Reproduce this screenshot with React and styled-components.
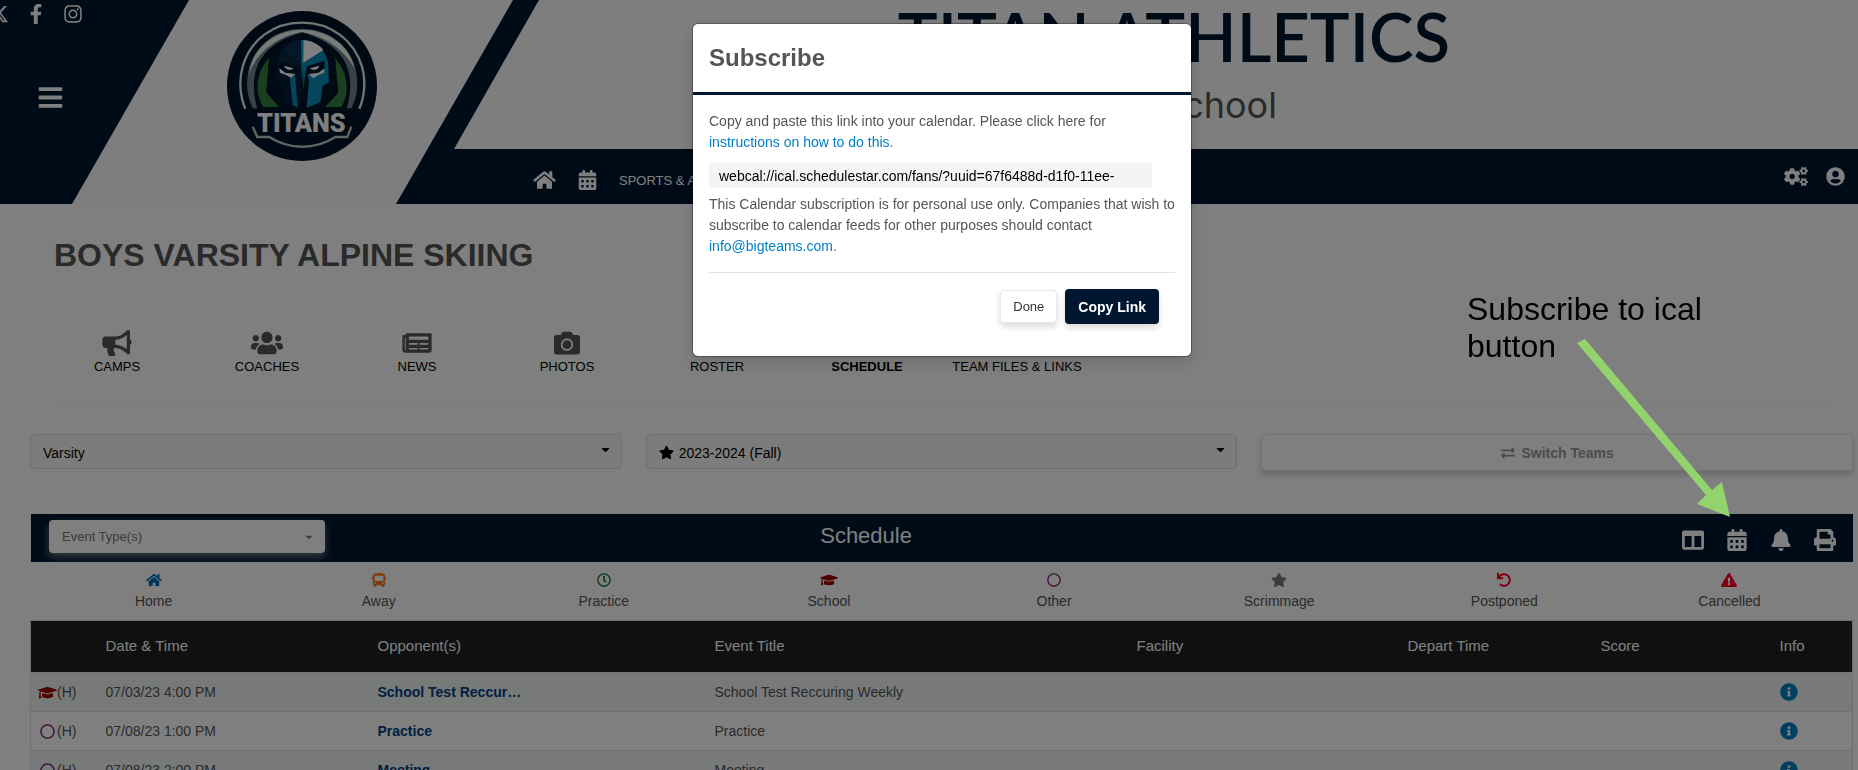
import React, { useState } from 'react';
import styled, { createGlobalStyle } from 'styled-components';
import {
    FaBars,
    FaBell,
    FaBullhorn,
    FaBus,
    FaCalendarAlt,
    FaCamera,
    FaCaretDown,
    FaClipboardList,
    FaCogs,
    FaColumns,
    FaExchangeAlt,
    FaExclamationTriangle,
    FaFacebookF,
    FaFolderOpen,
    FaGraduationCap,
    FaHome,
    FaInfoCircle,
    FaInstagram,
    FaNewspaper,
    FaPrint,
    FaRegCircle,
    FaRegClock,
    FaStar,
    FaUndo,
    FaUserCircle,
    FaUsers
} from 'react-icons/fa';
import { FaXTwitter } from 'react-icons/fa6';

const navy = '#001631';
const gray = '#555';
const link = '#007fc4';

const GlobalStyle = createGlobalStyle`
    * {
        box-sizing: border-box;
    }
    body {
        margin: 0;
        overflow: hidden;
        background-color: white;
        color: ${gray};
        font-family: "Helvetica Neue", "Liberation Sans", Arial, sans-serif;
        font-size: 14px;
    }
    button, select, input {
        font-family: inherit;
    }
    svg {
        display: block;
        flex-shrink: 0;
    }
`;

const Page = styled.div`
    position: relative;
`;

const Header = styled.header`
    display: flex;
    height: 204px;
    background-color: #fcfcfc;
`;

const Corner = styled.div`
    width: 189px;
    background-color: ${navy};
    color: white;
    clip-path: polygon(0 0, 100% 0, 72px 100%, 0 100%);
`;

const Social = styled.div`
    display: flex;
    align-items: center;
    gap: 17px;
    height: 27px;
    margin-left: -11px;
    a {
        color: white;
    }
    svg {
        height: 20px;
        width: 20px;
    }
`;

const IconButton = styled.button`
    padding: 0;
    border: none;
    background: none;
    color: white;
    cursor: pointer;
    svg {
        height: ${props => props.$size}px;
        width: ${props => props.$size}px;
    }
`;

const Menu = styled.div`
    padding: 57px 0 0 37px;
`;

const LogoLink = styled.a`
    width: 207px;
    padding: 11px 0 0 38px;
    svg {
        width: 150px;
        height: 150px;
    }
`;

const Banner = styled.div`
    flex: 1;
    display: flex;
    flex-direction: column;
    background-color: ${navy};
    clip-path: polygon(117px 0, 100% 0, 100% 100%, 0 100%);
`;

const BannerTitle = styled.div`
    height: 149px;
    margin-left: 58px;
    padding-left: 36px;
    background-color: #fcfcfc;
    clip-path: polygon(85px 0, 100% 0, 100% 100%, 0 100%);
    text-align: center;
`;

const SchoolName = styled.div`
    font-family: Lato, sans-serif;
    font-size: 67px;
    line-height: 72px;
    font-weight: 600;
    color: ${navy};
`;

const SchoolType = styled.div`
    font-family: Inter, sans-serif;
    font-size: 36px;
    line-height: 66px;
`;

const Nav = styled.nav`
    flex: 1;
    display: flex;
    align-items: center;
    gap: 20px;
    padding: 7px 13px 0 137px;
    color: white;
    font-size: 13px;
    a {
        color: white;
        text-decoration: none;
    }
    svg {
        height: 20px;
        width: 23px;
    }
`;

const NavRight = styled.div`
    display: flex;
    align-items: center;
    gap: 18px;
    margin-left: auto;
    padding-bottom: 8px;
    svg {
        height: 19px;
        width: 24px;
    }
    a:last-child svg {
        width: 19px;
    }
`;

const Main = styled.main`
    padding: 32px 5px 0 30px;
`;

const TeamTitle = styled.h1`
    margin: 0 24px;
    font-size: 32px;
    line-height: 38px;
`;

const Tabs = styled.nav`
    display: flex;
    margin: 56px 12px 0;
`;

const Tab = styled.a`
    width: 150px;
    display: flex;
    flex-direction: column;
    align-items: center;
    gap: 1px;
    color: black;
    text-decoration: none;
    white-space: nowrap;
    font-size: 13px;
    line-height: 20px;
    font-weight: ${props => (props.$active ? 'bold' : 'normal')};
    svg {
        height: 26px;
        width: 32px;
        color: ${gray};
    }
`;

const Divider = styled.hr`
    margin: 24px 23px 32px 25px;
    border: none;
    border-top: 1px solid #f6f6f6;
`;

const Filters = styled.div`
    display: grid;
    grid-template-columns: repeat(3, 1fr);
    align-items: start;
    gap: 24px;
`;

const Field = styled.label`
    display: flex;
    align-items: center;
    gap: 5px;
    height: 35px;
    padding: 2px 9px 0 12px;
    border: 1px solid #dde3e3;
    border-radius: 4px;
    background-color: #f8f8f8;
    color: black;
`;

const Select = styled.select`
    flex: 1;
    min-width: 0;
    padding: 0;
    appearance: none;
    border: none;
    background: none;
    font-size: ${props => props.$size || 14}px;
    color: inherit;
`;

const Caret = styled(FaCaretDown)`
    width: 13px;
    height: 13px;
    margin-bottom: 6px;
`;

const SwitchButton = styled.button`
    display: flex;
    align-items: center;
    justify-content: center;
    gap: 7px;
    height: 37px;
    border: 1px solid #e4eaea;
    border-radius: 4px;
    background-color: white;
    box-shadow: 0 4px 6px rgba(60, 80, 80, 0.25);
    color: #999;
    font-size: 14px;
    font-weight: bold;
`;

const ScheduleBar = styled.div`
    display: grid;
    grid-template-columns: 3fr 5fr 4fr;
    height: 48px;
    margin: 43px 0 0 1px;
    background-color: ${navy};
    color: white;
`;

const EventField = styled(Field)`
    width: 276px;
    height: 33px;
    margin: 6px 0 0 18px;
    padding: 0 11px 0 13px;
    border: none;
    background-color: white;
    box-shadow: 0 4px 8px rgba(255, 255, 255, 0.4);
    color: #777;
`;

const ScheduleTitle = styled.h2`
    margin: 0;
    text-align: center;
    font-size: 22px;
    line-height: 43px;
    font-weight: normal;
`;

const Tools = styled.div`
    display: flex;
    align-items: center;
    justify-content: flex-end;
    gap: 22px;
    padding: 4px 17px 0 0;
`;

const Legend = styled.ul`
    display: grid;
    grid-template-columns: repeat(8, 1fr);
    margin: 0;
    padding: 11px 11px 8px;
    list-style: none;
`;

const LegendItem = styled.li`
    display: flex;
    flex-direction: column;
    align-items: center;
    gap: 4px;
    line-height: 21px;
    svg {
        height: 14px;
        width: 18px;
        color: ${props => props.$color};
    }
`;

const Table = styled.table`
    width: 100%;
    table-layout: fixed;
    border-collapse: collapse;
    border: 1px solid #dde3e3;
    text-align: left;
`;

const HeadCell = styled.th`
    height: 52px;
    padding: 0 9px 2px;
    border-bottom: 2px solid #e8ebea;
    background-color: #212121;
    color: white;
    font-size: 15px;
    font-weight: normal;
`;

const Row = styled.tr`
    border-bottom: 1px solid #dde3e3;
    &:nth-child(2n + 1) {
        background-color: #f0f3f2;
    }
`;

const Cell = styled.td`
    height: 39px;
    padding: 0 9px;
    a {
        color: #004285;
        font-weight: bold;
        text-decoration: none;
    }
`;

const EventKind = styled.span`
    display: flex;
    align-items: center;
    justify-content: flex-end;
    margin-right: 11px;
    svg {
        height: 15px;
        width: 19px;
        color: ${props => props.$color};
    }
`;

const InfoIcon = styled(FaInfoCircle)`
    width: 18px;
    height: 18px;
    color: ${link};
`;

const Backdrop = styled.div`
    position: fixed;
    inset: 0;
    display: flex;
    align-items: flex-start;
    justify-content: center;
    padding: 24px 0 0 26px;
    background-color: rgba(0, 0, 0, 0.5);
`;

const Modal = styled.div`
    width: 498px;
    border-radius: 5px;
    background-color: white;
    box-shadow: 0 0 1px 1px rgba(0, 0, 0, 0.3), 0 6px 16px rgba(0, 0, 0, 0.15);
`;

const ModalHeader = styled.div`
    padding: 19px 16px;
    border-bottom: 3px solid ${navy};
    h2 {
        margin: 0;
        font-size: 24px;
        line-height: 30px;
    }
`;

const ModalBody = styled.div`
    padding: 16px 16px 32px;
    line-height: 21px;
    p {
        margin: 0;
    }
    a {
        color: ${link};
        text-decoration: none;
    }
`;

const LinkInput = styled.input`
    display: block;
    width: 95%;
    height: 25px;
    margin: 10px 0 6px;
    padding: 0 10px;
    border: none;
    background-color: #f4f4f4;
    font-size: 14px;
    color: black;
`;

const ModalActions = styled.div`
    display: flex;
    align-items: center;
    justify-content: flex-end;
    gap: 8px;
    margin-top: 15px;
    padding: 16px 16px 0;
    border-top: 1px solid #dee2e6;
`;

const DoneButton = styled.button`
    height: 33px;
    padding: 0 12px;
    border: 1px solid #e8e8e8;
    border-radius: 4px;
    background-color: white;
    box-shadow: 0 4px 6px rgba(0, 0, 0, 0.14);
    font-size: 13px;
    color: #333;
`;

const CopyButton = styled.button`
    height: 35px;
    padding: 0 13px;
    border: none;
    border-radius: 4px;
    background-color: ${navy};
    box-shadow: 0 4px 6px rgba(0, 0, 0, 0.14);
    font-size: 14px;
    font-weight: bold;
    color: white;
`;

const Note = styled.div`
    position: absolute;
    top: 291px;
    left: 1467px;
    width: 250px;
    color: black;
    font-size: 32px;
    line-height: 37px;
`;

const Arrow = styled.svg`
    position: absolute;
    top: 339px;
    left: 1577px;
    width: 153px;
    height: 178px;
`;

const Logo = () => (
    <svg viewBox="81 33 450 450" role="img" aria-label="Titans">
        <circle cx="306" cy="258" r="225" fill="#00142b" />
        <path d="M136 326 C120 290 116 240 128 200 C150 120 220 68 306 68 C392 68 462 120 486 200 C498 240 494 290 478 326" fill="none" stroke="#e3ece9" strokeWidth="7" />
        <path d="M160 322 C134 270 140 200 172 156 C205 112 252 90 306 89 C360 90 408 112 441 156 C473 200 479 270 453 322 L444 322 C458 270 458 220 432 176 C405 132 350 104 306 98 C262 104 207 132 180 176 C154 220 154 270 168 322 Z" fill="#6f8689" stroke="#6f8689" strokeWidth="5" />
        <path d="M147 222 C156 146 222 90 306 89 C390 90 450 140 464 206 C430 142 360 104 306 97 C246 104 172 150 147 222 Z" fill="#f2f6f5" />
        <path d="M207 174 C166 220 164 278 190 321 L237 321 L199 276 Z" fill="#34803e" />
        <path d="M405 174 C446 220 450 278 424 321 L373 321 L414 278 Z" fill="#34803e" />
        <path d="M306 97 C260 112 222 138 208 174 L199 276 L240 323 L373 323 L414 278 L405 174 C390 138 352 112 306 97 Z" fill="#00142b" />
        <path d="M304 120 C268 122 242 142 232 176 L228 245 L248 256 L254 305 L292 323 L304 270 Z" fill="#021c3c" />
        <path d="M304 120 C280 122 262 134 252 148 L304 192 Z" fill="#063354" />
        <path d="M252 148 C240 160 234 174 232 190 L300 206 L304 192 Z" fill="#042744" />
        <path d="M308 120 C345 124 378 150 384 186 L387 247 L368 258 L361 307 L320 323 L327 240 L317 214 L310 270 Z" fill="#0a8db5" />
        <path d="M310 120 C336 122 358 134 370 150 L310 188 Z" fill="#fff" />
        <path d="M303 120 L310 120 L308 245 L304 210 Z" fill="#0aa5c0" />
        <path d="M236 182 L290 200 L296 226 L262 222 L238 206 Z M373 182 L322 198 L316 224 L350 222 L374 206 Z" fill="#00142b" />
        <path d="M238 205 L256 218 L286 222 L274 235 L260 226 L240 218 Z M374 205 L356 218 L326 222 L340 235 L354 226 L372 218 Z" fill="#fff" />
        <path d="M252 197 L280 205 C276 212 258 212 252 197 Z M358 197 L330 205 C336 212 354 212 358 197 Z" fill="#fff" />
        <path d="M270 235 L285 224 L293 323 L278 315 Z" fill="#0a8db5" />
        <text x="304" y="395" textAnchor="middle" fontFamily="Roboto, sans-serif" fontWeight="900" fontSize="76" fill="#fff">TITANS</text>
        <path d="M158 380 L172 411 L208 411 C268 450 346 450 406 411 L442 411 L454 380" fill="none" stroke="#b9cfca" strokeWidth="7" />
    </svg>
);

const tabs = [
    { label: 'CAMPS', Icon: FaBullhorn },
    { label: 'COACHES', Icon: FaUsers },
    { label: 'NEWS', Icon: FaNewspaper },
    { label: 'PHOTOS', Icon: FaCamera },
    { label: 'ROSTER', Icon: FaClipboardList },
    { label: 'SCHEDULE', Icon: FaCalendarAlt, active: true },
    { label: 'TEAM FILES & LINKS', Icon: FaFolderOpen }
];

const legend = [
    { label: 'Home', Icon: FaHome, color: '#006eb5' },
    { label: 'Away', Icon: FaBus, color: '#ff7a1f' },
    { label: 'Practice', Icon: FaRegClock, color: '#0b6a2a' },
    { label: 'School', Icon: FaGraduationCap, color: '#a30000' },
    { label: 'Other', Icon: FaRegCircle, color: '#7a1a7a' },
    { label: 'Scrimmage', Icon: FaStar, color: '#777' },
    { label: 'Postponed', Icon: FaUndo, color: '#ff0022' },
    { label: 'Cancelled', Icon: FaExclamationTriangle, color: '#ff0022' }
];

const columns = [
    { label: '', width: 66 },
    { label: 'Date & Time', width: 272 },
    { label: 'Opponent(s)', width: 337 },
    { label: 'Event Title', width: 422 },
    { label: 'Facility', width: 271 },
    { label: 'Depart Time', width: 193 },
    { label: 'Score', width: 179 },
    { label: 'Info', width: 82 }
];

const events = [
    { id: 1, Icon: FaGraduationCap, color: '#a30000', date: '07/03/23 4:00 PM', opponent: 'School Test Reccur…', title: 'School Test Reccuring Weekly' },
    { id: 2, Icon: FaRegCircle, color: '#7a1a7a', date: '07/08/23 1:00 PM', opponent: 'Practice', title: 'Practice' },
    { id: 3, Icon: FaRegCircle, color: '#7a1a7a', date: '07/08/23 2:00 PM', opponent: 'Meeting', title: 'Meeting' }
];

const App = () => {
    const [open, setOpen] = useState(true);
    const [url] = useState('webcal://ical.schedulestar.com/fans/?uuid=67f6488d-d1f0-11ee-');

    return (
        <Page>
            <GlobalStyle />
            <Header>
                <Corner>
                    <Social>
                        <a href="#x" aria-label="X"><FaXTwitter /></a>
                        <a href="#facebook" aria-label="Facebook"><FaFacebookF /></a>
                        <a href="#instagram" aria-label="Instagram"><FaInstagram /></a>
                    </Social>
                    <Menu>
                        <IconButton $size={27} aria-label="Menu"><FaBars /></IconButton>
                    </Menu>
                </Corner>
                <LogoLink href="#home"><Logo /></LogoLink>
                <Banner>
                    <BannerTitle>
                        <SchoolName>TITAN ATHLETICS</SchoolName>
                        <SchoolType>High School</SchoolType>
                    </BannerTitle>
                    <Nav>
                        <a href="#home" aria-label="Home"><FaHome /></a>
                        <a href="#calendar" aria-label="Calendar"><FaCalendarAlt /></a>
                        <a href="#sports">SPORTS & ACTIVITIES</a>
                        <NavRight>
                            <a href="#settings" aria-label="Settings"><FaCogs /></a>
                            <a href="#account" aria-label="Account"><FaUserCircle /></a>
                        </NavRight>
                    </Nav>
                </Banner>
            </Header>
            <Main>
                <TeamTitle>BOYS VARSITY ALPINE SKIING</TeamTitle>
                <Tabs>
                    {tabs.map(({ label, Icon, active }) => (
                        <Tab key={label} href="#team" $active={active}>
                            <Icon />
                            {label}
                        </Tab>
                    ))}
                </Tabs>
                <Divider />
                <Filters>
                    <Field>
                        <Select aria-label="Level">
                            <option>Varsity</option>
                        </Select>
                        <Caret />
                    </Field>
                    <Field>
                        <FaStar size={15} />
                        <Select aria-label="Season">
                            <option>2023-2024 (Fall)</option>
                        </Select>
                        <Caret />
                    </Field>
                    <SwitchButton disabled>
                        <FaExchangeAlt />
                        Switch Teams
                    </SwitchButton>
                </Filters>
                <ScheduleBar>
                    <EventField>
                        <Select aria-label="Event types" $size={13}>
                            <option>Event Type(s)</option>
                        </Select>
                        <FaCaretDown size={10} />
                    </EventField>
                    <ScheduleTitle>Schedule</ScheduleTitle>
                    <Tools>
                        <IconButton $size={22} aria-label="Columns"><FaColumns /></IconButton>
                        <IconButton $size={22} aria-label="Subscribe" onClick={() => setOpen(true)}><FaCalendarAlt /></IconButton>
                        <IconButton $size={22} aria-label="Alerts"><FaBell /></IconButton>
                        <IconButton $size={22} aria-label="Print"><FaPrint /></IconButton>
                    </Tools>
                </ScheduleBar>
                <Legend>
                    {legend.map(({ label, Icon, color }) => (
                        <LegendItem key={label} $color={color}>
                            <Icon />
                            {label}
                        </LegendItem>
                    ))}
                </Legend>
                <Table>
                    <colgroup>
                        {columns.map(column => (
                            <col key={column.label} width={column.width} />
                        ))}
                    </colgroup>
                    <thead>
                        <tr>
                            {columns.map(column => (
                                <HeadCell key={column.label}>{column.label}</HeadCell>
                            ))}
                        </tr>
                    </thead>
                    <tbody>
                        {events.map(({ id, Icon, color, date, opponent, title }) => (
                            <Row key={id}>
                                <Cell>
                                    <EventKind $color={color}><Icon />(H)</EventKind>
                                </Cell>
                                <Cell>{date}</Cell>
                                <Cell><a href="#event">{opponent}</a></Cell>
                                <Cell>{title}</Cell>
                                <Cell />
                                <Cell />
                                <Cell />
                                <Cell><InfoIcon /></Cell>
                            </Row>
                        ))}
                    </tbody>
                </Table>
            </Main>
            {open && (
                <Backdrop>
                    <Modal role="dialog" aria-labelledby="subscribe-title">
                        <ModalHeader>
                            <h2 id="subscribe-title">Subscribe</h2>
                        </ModalHeader>
                        <ModalBody>
                            <p>
                                Copy and paste this link into your calendar. Please click here for{' '}
                                <a href="#instructions">instructions on how to do this</a>.
                            </p>
                            <LinkInput aria-label="Calendar link" value={url} readOnly />
                            <p>
                                This Calendar subscription is for personal use only. Companies that wish to
                                subscribe to calendar feeds for other purposes should contact{' '}
                                <a href="mailto:info@bigteams.com">info@bigteams.com</a>.
                            </p>
                            <ModalActions>
                                <DoneButton onClick={() => setOpen(false)}>Done</DoneButton>
                                <CopyButton onClick={() => navigator.clipboard.writeText(url)}>Copy Link</CopyButton>
                            </ModalActions>
                        </ModalBody>
                    </Modal>
                </Backdrop>
            )}
            <Note>Subscribe to ical button</Note>
            <Arrow viewBox="0 0 153 178" aria-hidden="true">
                <polygon points="0,4 8,0 135,151 145,143 153,178 120,165 129,156" fill="#92d36e" />
            </Arrow>
        </Page>
    );
};

export default App;
